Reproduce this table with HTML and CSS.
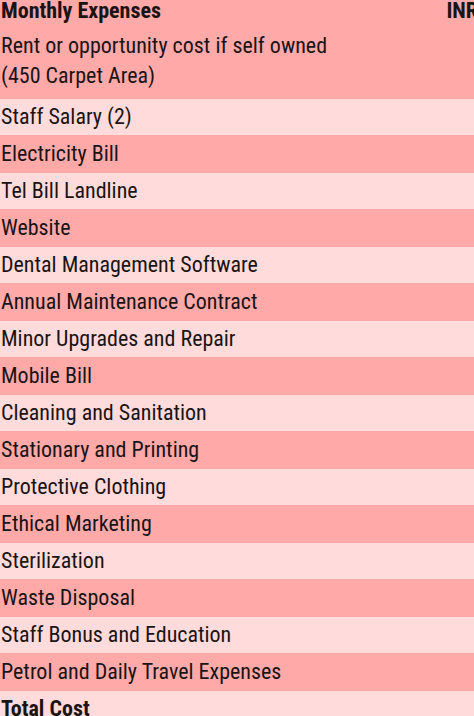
FILE: index.html
```html
<!DOCTYPE html>
<html lang="en">
<head>
<meta charset="utf-8">
<title>Monthly Expenses</title>
<link rel="stylesheet" href="styles.css">
</head>
<body>
<div class="sheet">
  <div class="row head dark"><span class="label">Monthly Expenses</span><span class="unit">INR</span></div>
  <div class="row multi dark"><span class="label">Rent or opportunity cost if self owned<br>(450 Carpet Area)</span></div>
  <div class="row light"><span class="label">Staff Salary (2)</span></div>
  <div class="row dark"><span class="label">Electricity Bill</span></div>
  <div class="row light"><span class="label">Tel Bill Landline</span></div>
  <div class="row dark"><span class="label">Website</span></div>
  <div class="row light"><span class="label">Dental Management Software</span></div>
  <div class="row dark"><span class="label">Annual Maintenance Contract</span></div>
  <div class="row light"><span class="label">Minor Upgrades and Repair</span></div>
  <div class="row dark"><span class="label">Mobile Bill</span></div>
  <div class="row light"><span class="label">Cleaning and Sanitation</span></div>
  <div class="row dark"><span class="label">Stationary and Printing</span></div>
  <div class="row light"><span class="label">Protective Clothing</span></div>
  <div class="row dark"><span class="label">Ethical Marketing</span></div>
  <div class="row light"><span class="label">Sterilization</span></div>
  <div class="row dark"><span class="label">Waste Disposal</span></div>
  <div class="row light"><span class="label">Staff Bonus and Education</span></div>
  <div class="row dark"><span class="label">Petrol and Daily Travel Expenses</span></div>
  <div class="row light total"><span class="label">Total Cost</span></div>
</div>
</body>
</html>
```
FILE: styles.css
```css
html, body {
  margin: 0;
  padding: 0;
  overflow: hidden;
  background: #ffdbdb;
}

.sheet {
  width: 478px;
  display: flex;
  flex-direction: column;
  font-family: "Roboto Condensed", Roboto, sans-serif;
  font-stretch: condensed;
  font-size: 22px;
  color: #1a1414;
}

.row {
  display: flex;
  justify-content: space-between;
  align-items: center;
  padding-left: 1px;
  white-space: nowrap;
}

.dark {
  background: #ffa9a9;
  height: 38px;
  line-height: 38px;
}

.light {
  background: #ffdbdb;
  height: 36px;
  line-height: 36px;
}

.head {
  height: 24px;
  line-height: 22px;
  font-weight: bold;
  align-items: flex-start;
}

.multi {
  height: auto;
  line-height: 30px;
  padding-top: 7px;
  padding-bottom: 8px;
}

.total {
  font-weight: bold;
}

.unit {
  font-weight: bold;
}
```
